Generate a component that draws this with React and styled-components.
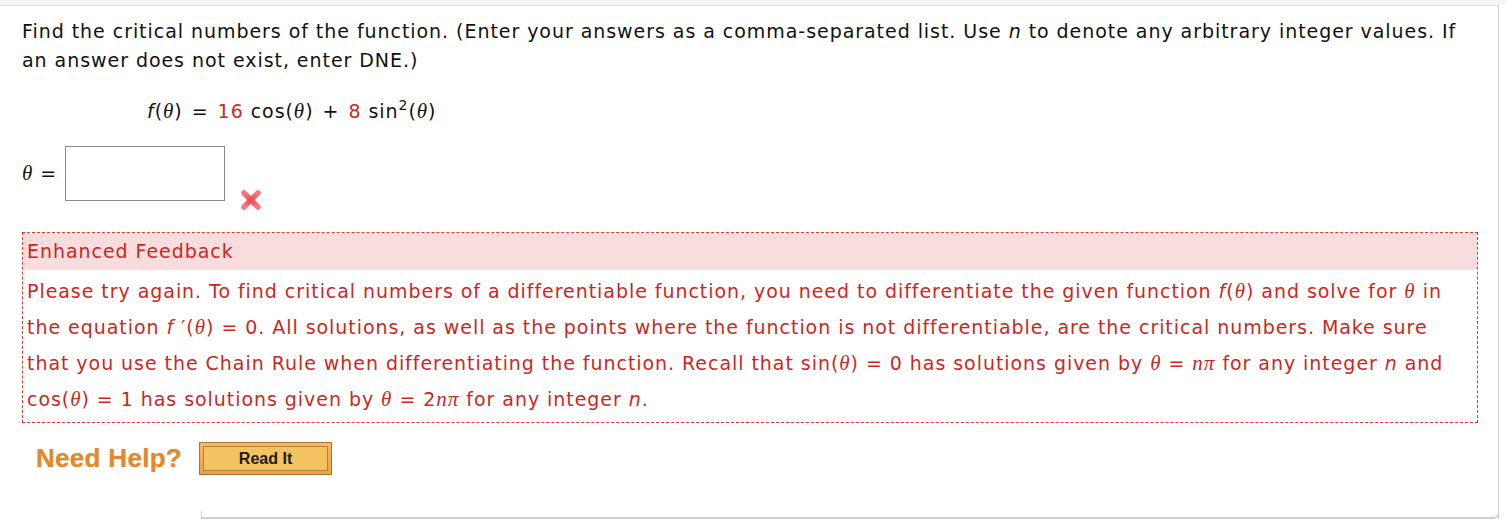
import React from 'react'
import styled, { createGlobalStyle } from 'styled-components'

const Global = createGlobalStyle`
  html, body { margin: 0; padding: 0; background: #fff; }
  body { font-family: "DejaVu Sans", Verdana, sans-serif; color: #111; }
`

const TopBand = styled.div`
  height: 5px;
  background: #f6f6f6;
`

const Panel = styled.div`
  width: 1499px;
  height: 514px;
  border-top: 1px solid #dcdcdc;
  border-right: 1px solid #cfcfcf;
  box-sizing: border-box;
  display: flex;
  flex-direction: column;
`

const Content = styled.div`
  flex: 1;
  padding: 11px 0 0 22px;
`

const Foot = styled.div`
  margin-left: 201px;
  margin-right: -1px;
  height: 6px;
  border-left: 1px solid #cfcfcf;
  border-right: 1px solid #cfcfcf;
  border-bottom: 2px solid #cfcfcf;
  border-bottom-right-radius: 6px;
`

const Text = styled.div`
  font-size: 19px;
  letter-spacing: 0.95px;
  white-space: nowrap;
`

const Intro = styled(Text)`
  line-height: 29px;
`

const Var = styled.i`
  font-family: "DejaVu Sans", sans-serif;
  font-style: italic;
`

const MathVar = styled.i`
  font-family: "Liberation Serif", "DejaVu Serif", serif;
  font-style: italic;
  font-size: 21px;
  line-height: 0;
  letter-spacing: 1px;
`

const Red = styled.span`
  color: #cc2a22;
`

const Formula = styled(Text)`
  margin: 22px 0 0 125px;
  line-height: 28px;
`

const Sup = styled.sup`
  font-size: 14px;
  line-height: 0;
  vertical-align: 8px;
`

const Eq = styled.span`
  margin: 0 9px;
`

const AnswerRow = styled.div`
  display: flex;
  align-items: flex-start;
  margin-top: 21px;
`

const Label = styled(Text)`
  line-height: 55px;
  margin-right: 8px;
`

const Input = styled.input`
  width: 160px;
  height: 55px;
  box-sizing: border-box;
  border: 1px solid #8a8a8a;
  background: #fff;
  margin: 0;
`

const Cross = styled.svg`
  width: 24px;
  height: 24px;
  margin: 42px 0 0 14px;
`

const Feedback = styled.div`
  margin-top: 20px;
  width: 1456px;
  box-sizing: border-box;
  border: 1px dashed #e8322c;
  color: #c9281f;
`

const FeedbackHead = styled(Text)`
  background: #f9dcdd;
  height: 37px;
  line-height: 37px;
  padding-left: 4px;
`

const FeedbackBody = styled(Text)`
  padding: 3px 4px 5px 4px;
  line-height: 36px;
`

const HelpRow = styled.div`
  display: flex;
  align-items: center;
  margin-top: 19px;
  padding-left: 14px;
  gap: 17px;
`

const HelpText = styled.span`
  font-family: "Liberation Sans", Arial, sans-serif;
  font-weight: bold;
  font-size: 26px;
  letter-spacing: 0.3px;
  color: #e2892d;
  text-shadow: 0 0 1px rgba(226, 137, 45, 0.6);
`

const ReadButton = styled.button`
  width: 133px;
  height: 33px;
  padding: 3px;
  box-sizing: border-box;
  border: 1px solid #a87530;
  background: linear-gradient(#f7b865, #eea04a);
  cursor: pointer;
`

const ButtonFace = styled.span`
  display: block;
  height: 100%;
  box-sizing: border-box;
  border: 1px solid #b4843f;
  background: #f4c361;
  font-family: "Liberation Sans", Arial, sans-serif;
  font-weight: bold;
  font-size: 16px;
  line-height: 23px;
  color: #1d1a14;
`

const T = () => <MathVar>θ</MathVar>

export default function App() {
  return (
    <>
      <Global />
      <TopBand />
      <Panel>
        <Content>
          <Intro>
            Find the critical numbers of the function. (Enter your answers as a comma-separated list. Use <Var>n</Var> to denote any arbitrary integer values. If
            <br />
            an answer does not exist, enter DNE.)
          </Intro>
          <Formula>
            <Var>f</Var>(<T />)<Eq>=</Eq><Red>16</Red> cos(<T />)<Eq>+</Eq><Red>8</Red> sin<Sup>2</Sup>(<T />)
          </Formula>
          <AnswerRow>
            <Label><T /> =</Label>
            <Input type="text" aria-label="theta" />
            <Cross viewBox="0 0 24 24">
              <defs>
                <radialGradient id="xg" cx="50%" cy="50%" r="60%">
                  <stop offset="0%" stopColor="#e9494f" />
                  <stop offset="100%" stopColor="#f07a7e" />
                </radialGradient>
              </defs>
              <path d="M5 5 L19 19 M19 5 L5 19" stroke="url(#xg)" strokeWidth="5.5" strokeLinecap="round" fill="none" />
            </Cross>
          </AnswerRow>
          <Feedback>
            <FeedbackHead>Enhanced Feedback</FeedbackHead>
            <FeedbackBody>
              Please try again. To find critical numbers of a differentiable function, you need to differentiate the given function <Var>f</Var>(<T />) and solve for <T /> in
              <br />
              the equation <Var>f</Var> ′(<T />) = 0. All solutions, as well as the points where the function is not differentiable, are the critical numbers. Make sure
              <br />
              that you use the Chain Rule when differentiating the function. Recall that sin(<T />) = 0 has solutions given by <T /> = <MathVar>nπ</MathVar> for any integer <Var>n</Var> and
              <br />
              cos(<T />) = 1 has solutions given by <T /> = 2<MathVar>nπ</MathVar> for any integer <Var>n</Var>.
            </FeedbackBody>
          </Feedback>
          <HelpRow>
            <HelpText>Need Help?</HelpText>
            <ReadButton><ButtonFace>Read It</ButtonFace></ReadButton>
          </HelpRow>
        </Content>
        <Foot />
      </Panel>
    </>
  )
}
